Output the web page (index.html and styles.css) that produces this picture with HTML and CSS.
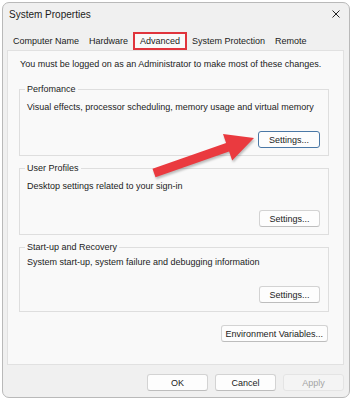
FILE: index.html
```html
<!DOCTYPE html>
<html>
<head>
  <title>System Properties</title>
  <meta charset="UTF-8">
  <link rel="stylesheet" href="styles.css">
</head>
<body>
  <div class="window">
    <div class="titlebar">
      <span class="title">System Properties</span>
      <svg class="close" width="8" height="8" viewBox="0 0 8 8">
        <path d="M0.5 0.5 L7.5 7.5 M7.5 0.5 L0.5 7.5" stroke="#222" stroke-width="1" fill="none"/>
      </svg>
    </div>

    <div class="tabs">
      <div class="tab">Computer Name</div>
      <div class="tab">Hardware</div>
      <div class="tab active">Advanced</div>
      <div class="tab">System Protection</div>
      <div class="tab">Remote</div>
    </div>

    <div class="panel">
      <p class="notice">You must be logged on as an Administrator to make most of these changes.</p>

      <fieldset class="group">
        <legend>Perfomance</legend>
        <p class="desc">Visual effects, processor scheduling, memory usage and virtual memory</p>
        <div class="group-actions">
          <button class="focused">Settings...</button>
        </div>
      </fieldset>

      <fieldset class="group">
        <legend>User Profiles</legend>
        <p class="desc">Desktop settings related to your sign-in</p>
        <div class="group-actions">
          <button>Settings...</button>
        </div>
      </fieldset>

      <fieldset class="group tight">
        <legend>Start-up and Recovery</legend>
        <p class="desc">System start-up, system failure and debugging information</p>
        <div class="group-actions">
          <button>Settings...</button>
        </div>
      </fieldset>

      <div class="env-row">
        <button class="wide">Environment Variables...</button>
      </div>
    </div>

    <div class="footer">
      <button>OK</button>
      <button>Cancel</button>
      <button class="disabled">Apply</button>
    </div>
  </div>

  <!-- annotation arrow drawn over the dialog -->
  <svg class="arrow" width="352" height="400" viewBox="0 0 352 400">
    <polygon points="152.5,168.8 226.1,143 223,134 254,138 232.2,160.4 229.1,151.5 155.5,177.2" fill="#ea3a3f"/>
  </svg>
</body>
</html>
```

FILE: styles.css
```css
body {
  margin: 0;
  position: relative;
  width: 352px;
  height: 400px;
  font-family: 'Liberation Sans', Arial, sans-serif;
  font-size: 9px;
  color: #1b1b1b;
  background-color: #ffffff;
  overflow: hidden;
}

.window {
  margin: 2px 2px 0 2px;
  border: 1px solid #b9b9b9;
  border-radius: 7px;
  background-color: #f0f0f0;
  height: 394px;
}

.titlebar {
  height: 22px;
  display: flex;
  align-items: center;
  justify-content: space-between;
  padding: 0 9px 0 6px;
}

.title {
  font-size: 10px;
}

.tabs {
  display: flex;
  margin-top: 7px;
  padding-left: 5px;
  height: 18px;
}

.tab {
  padding: 0 5px;
  line-height: 19px;
}

.tab.active {
  border: 2px solid #e0343c;
  line-height: 15px;
  padding: 0 5px;
  background-color: #f9f9f9;
}

.panel {
  margin: 0 5px 0 4px;
  border: 1px solid #e1e1e1;
  background-color: #f9f9f9;
  padding: 5px 14px 22px 11px;
}

.notice {
  margin: 0 0 10px 1px;
  line-height: 16px;
}

.group {
  margin: 0 0 5px 0;
  border: 1px solid #dedede;
  padding: 0 8px 7px 7px;
}

.group legend {
  padding: 0 2px;
  margin-left: -2px;
  line-height: 14px;
}

.desc {
  margin: 3px 0 0 0;
  line-height: 16px;
}

.group-actions {
  display: flex;
  justify-content: flex-end;
  margin-top: 16px;
}

.group.tight .desc {
  margin-top: 0;
}

.group.tight .group-actions {
  margin-top: 16px;
}

.group.tight {
  padding-bottom: 8px;
}

button {
  font-family: 'Liberation Sans', Arial, sans-serif;
  font-size: 9px;
  color: #1b1b1b;
  height: 17px;
  min-width: 61px;
  padding: 0 4px;
  background-color: #fdfdfd;
  border: 1px solid #d3d3d3;
  border-bottom-color: #bdbdbd;
  border-radius: 3px;
}

button.focused {
  border: 1px solid #4a78a6;
  min-width: 62px;
}

button.disabled {
  color: #a4a4a4;
  background-color: #f4f4f4;
  border-color: #e4e4e4;
}

.env-row {
  display: flex;
  justify-content: flex-end;
  margin-top: 13px;
  padding-right: 1px;
}

.footer {
  display: flex;
  justify-content: flex-end;
  gap: 7px;
  margin-top: 9px;
  padding-right: 5px;
}

.arrow {
  position: absolute;
  top: 0;
  left: 0;
  pointer-events: none;
  filter: drop-shadow(1px 2px 1px rgba(0, 0, 0, 0.25));
}
```
